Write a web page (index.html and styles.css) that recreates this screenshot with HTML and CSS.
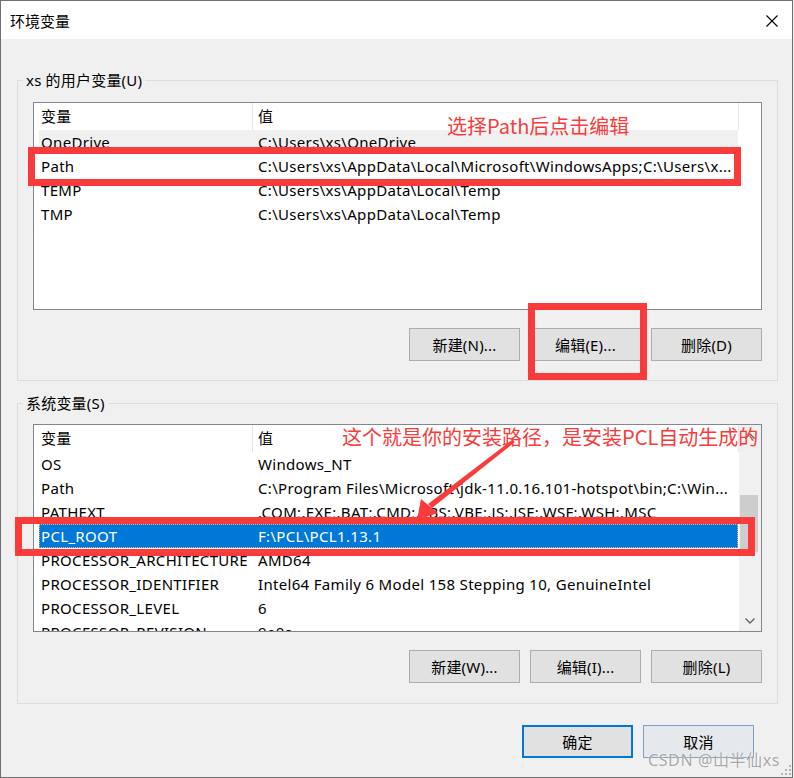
FILE: index.html
```html
<!DOCTYPE html>
<html lang="zh-CN">
<head>
<meta charset="utf-8">
<title>环境变量</title>
<link rel="stylesheet" href="styles.css">
</head>
<body>
<div class="win">
  <div class="titlebar">
    <span class="title">环境变量</span>
    <svg class="close" width="12" height="12" viewBox="0 0 12 12"><path d="M0.5 0.5 L11.5 11.5 M11.5 0.5 L0.5 11.5" stroke="#000" stroke-width="1.1" fill="none"/></svg>
  </div>
  <div class="content">
    <div class="group g1">
      <span class="legend">xs 的用户变量(U)</span>
      <div class="list">
        <div class="list-main">
          <div class="hdr"><div class="hc1">变量</div><div class="hc2">值</div></div>
          <div class="row hot"><div class="c1">OneDrive</div><div class="c2">C:\Users\xs\OneDrive</div></div>
          <div class="row"><div class="c1">Path</div><div class="c2">C:\Users\xs\AppData\Local\Microsoft\WindowsApps;C:\Users\x...</div></div>
          <div class="row"><div class="c1">TEMP</div><div class="c2">C:\Users\xs\AppData\Local\Temp</div></div>
          <div class="row"><div class="c1">TMP</div><div class="c2">C:\Users\xs\AppData\Local\Temp</div></div>
        </div>
      </div>
      <div class="btnrow">
        <button class="btn">新建(N)...</button>
        <button class="btn">编辑(E)...</button>
        <button class="btn">删除(D)</button>
      </div>
    </div>

    <div class="group g2">
      <span class="legend">系统变量(S)</span>
      <div class="list">
        <div class="list-main">
          <div class="hdr"><div class="hc1">变量</div><div class="hc2">值</div></div>
          <div class="row"><div class="c1">OS</div><div class="c2">Windows_NT</div></div>
          <div class="row"><div class="c1">Path</div><div class="c2">C:\Program Files\Microsoft\jdk-11.0.16.101-hotspot\bin;C:\Win...</div></div>
          <div class="row"><div class="c1">PATHEXT</div><div class="c2">.COM;.EXE;.BAT;.CMD;.VBS;.VBE;.JS;.JSE;.WSF;.WSH;.MSC</div></div>
          <div class="row sel"><div class="c1">PCL_ROOT</div><div class="c2">F:\PCL\PCL1.13.1</div></div>
          <div class="row"><div class="c1">PROCESSOR_ARCHITECTURE</div><div class="c2">AMD64</div></div>
          <div class="row"><div class="c1">PROCESSOR_IDENTIFIER</div><div class="c2">Intel64 Family 6 Model 158 Stepping 10, GenuineIntel</div></div>
          <div class="row"><div class="c1">PROCESSOR_LEVEL</div><div class="c2">6</div></div>
          <div class="row"><div class="c1">PROCESSOR_REVISION</div><div class="c2">9e0a</div></div>
        </div>
        <div class="vscroll">
          <div class="sb-arrow">
            <svg width="10" height="6" viewBox="0 0 10 6"><path d="M0.5 5.5 L5 1 L9.5 5.5" stroke="#606060" stroke-width="1.3" fill="none"/></svg>
          </div>
          <div class="sb-track"><div class="sb-thumb"></div></div>
          <div class="sb-arrow">
            <svg width="10" height="6" viewBox="0 0 10 6"><path d="M0.5 0.5 L5 5 L9.5 0.5" stroke="#606060" stroke-width="1.3" fill="none"/></svg>
          </div>
        </div>
      </div>
      <div class="btnrow">
        <button class="btn">新建(W)...</button>
        <button class="btn">编辑(I)...</button>
        <button class="btn">删除(L)</button>
      </div>
    </div>

    <div class="footer">
      <button class="btn default">确定</button>
      <button class="btn hover">取消</button>
    </div>
  </div>

  <div class="note note1">选择Path后点击编辑</div>
  <div class="note note2">这个就是你的安装路径，是安装PCL自动生成的</div>
  <div class="redbox rb1"></div>
  <div class="redbox rb2"></div>
  <div class="redbox rb3"></div>
  <svg class="arrow" width="120" height="100" viewBox="405 430 120 100">
    <polygon points="512,440 515,442 432,508 428,504" fill="#f93b3b"/>
    <polygon points="417,520 421,499 438,513" fill="#f93b3b"/>
  </svg>
  <div class="watermark">CSDN @山半仙xs</div>
  <svg class="grip" width="10" height="10" viewBox="0 0 10 10">
    <rect x="8" y="0" width="2" height="2" fill="#b0b0b0"/>
    <rect x="4" y="4" width="2" height="2" fill="#b0b0b0"/>
    <rect x="8" y="4" width="2" height="2" fill="#b0b0b0"/>
    <rect x="0" y="8" width="2" height="2" fill="#b0b0b0"/>
    <rect x="4" y="8" width="2" height="2" fill="#b0b0b0"/>
    <rect x="8" y="8" width="2" height="2" fill="#b0b0b0"/>
  </svg>
</div>
</body>
</html>
```

FILE: styles.css
```css
* { box-sizing: border-box; }

html, body {
  margin: 0;
  padding: 0;
  background: #f0f0f0;
}

body {
  font-family: "Noto Sans", "Noto Sans CJK SC", sans-serif;
  font-size: 15px;
  color: #000;
}

.win {
  position: relative;
  width: 793px;
  height: 778px;
  border: 1px solid #707070;
  background: #f0f0f0;
  overflow: hidden;
}

.titlebar {
  height: 38px;
  background: #fff;
  display: flex;
  align-items: center;
  justify-content: space-between;
  padding: 0 14px 0 9px;
}

.title {
  font-family: "Noto Sans CJK SC", sans-serif;
  font-size: 15px;
  line-height: 20px;
  margin-top: 1px;
}

.close {
  display: block;
  margin-top: 1px;
}

.content {
  padding: 0 14px 0 16px;
}

.group {
  position: relative;
  border: 1px solid #dcdcdc;
  padding: 21px 15px 19px 15px;
}

.g1 { margin-top: 41px; }
.g2 { margin-top: 22px; padding-top: 20px; padding-bottom: 20px; }

.legend {
  position: absolute;
  top: -11px;
  left: 5px;
  padding: 0 3px;
  line-height: 20px;
  background: #f0f0f0;
  letter-spacing: 0.2px;
}

.list {
  height: 208px;
  border: 1px solid #828790;
  background: #fff;
  display: flex;
  overflow: hidden;
}

.list-main {
  flex: 1;
  min-width: 0;
  overflow: hidden;
  letter-spacing: 0.32px;
}

.hdr {
  height: 27px;
  display: flex;
  line-height: 27px;
}

.hc1 {
  width: 219px;
  padding-left: 7px;
  border-right: 1px solid #e5e5e5;
}

.hc2 {
  width: 486px;
  padding-left: 5px;
  border-right: 1px solid #e5e5e5;
}

.row {
  height: 24px;
  line-height: 24px;
  display: flex;
  width: 699px;
  margin-left: 5px;
  white-space: nowrap;
}

.row.hot { background: #f0f0f0; }

.row.sel {
  background: #0078d7;
  color: #fff;
  outline: 1px dotted #f0b070;
  outline-offset: -1px;
}

.c1 {
  width: 213px;
  padding-left: 2px;
  overflow: hidden;
}

.c2 {
  flex: 1;
  padding-left: 6px;
  overflow: hidden;
}

.vscroll {
  width: 22px;
  background: #f0f0f0;
  display: flex;
  flex-direction: column;
}

.sb-arrow {
  height: 21px;
  display: flex;
  align-items: center;
  justify-content: center;
}

.sb-track {
  flex: 1;
  padding-top: 49px;
}

.sb-thumb {
  width: 18px;
  margin-left: 1px;
  height: 57px;
  background: #cdcdcd;
}

.btnrow {
  margin-top: 18px;
  display: flex;
  justify-content: flex-end;
  gap: 10px;
}

.btn {
  width: 111px;
  height: 33px;
  padding: 0;
  margin: 0;
  border: 1px solid #adadad;
  background: #e1e1e1;
  font-family: "Noto Sans", "Noto Sans CJK SC", sans-serif;
  font-size: 15px;
  color: #000;
  line-height: 20px;
  letter-spacing: 0.2px;
}

.btn.default {
  border: 2px solid #0078d7;
}

.btn.hover {
  border: 1px solid #7f9fc8;
  background: #e5e8ec;
}

.footer {
  margin-top: 21px;
  display: flex;
  justify-content: flex-end;
  gap: 10px;
  padding-right: 24px;
}

.note {
  position: absolute;
  color: #f93b3b;
  font-family: "Noto Sans CJK SC", sans-serif;
  font-size: 20px;
  line-height: 20px;
  white-space: nowrap;
}

.note1 { left: 446px; top: 115px; }
.note2 { left: 341px; top: 426px; }

.redbox {
  position: absolute;
  border: 7px solid #f93b3b;
}

.rb1 { left: 27px; top: 146px; width: 713px; height: 39px; }
.rb2 { left: 527px; top: 302px; width: 119px; height: 77px; }
.rb3 { left: 14px; top: 516px; width: 740px; height: 39px; }

.arrow {
  position: absolute;
  left: 404px;
  top: 429px;
}

.watermark {
  position: absolute;
  left: 647px;
  top: 750px;
  font-size: 16px;
  line-height: 18px;
  letter-spacing: 0.6px;
  color: rgba(140, 140, 140, 0.75);
  font-family: "Noto Sans", "Noto Sans CJK SC", sans-serif;
  text-shadow: 0 0 2px #fff;
}

.grip {
  position: absolute;
  right: 1px;
  bottom: 2px;
}
```
